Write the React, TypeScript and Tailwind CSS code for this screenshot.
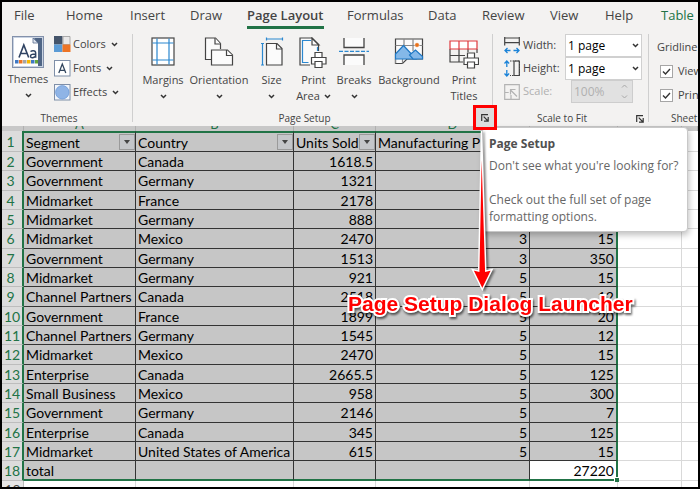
import { useState, type ReactNode } from "react";
import clsx from "clsx";

const tabs = [
  { name: "File", width: "w-[52px]" },
  { name: "Home", width: "w-[64px]" },
  { name: "Insert", width: "w-[60px]" },
  { name: "Draw", width: "w-[57px]" },
  { name: "Page Layout", width: "w-[100px]" },
  { name: "Formulas", width: "w-[81px]" },
  { name: "Data", width: "w-[54px]" },
  { name: "Review", width: "w-[68px]" },
  { name: "View", width: "w-[55px]" },
  { name: "Help", width: "w-[56px]" },
];

const rows = [
  ["Government", "Canada", "1618.5", "", ""],
  ["Government", "Germany", "1321", "", ""],
  ["Midmarket", "France", "2178", "", ""],
  ["Midmarket", "Germany", "888", "", ""],
  ["Midmarket", "Mexico", "2470", "3", "15"],
  ["Government", "Germany", "1513", "3", "350"],
  ["Midmarket", "Germany", "921", "5", "15"],
  ["Channel Partners", "Canada", "2518", "5", "12"],
  ["Government", "France", "1899", "5", "20"],
  ["Channel Partners", "Germany", "1545", "5", "12"],
  ["Midmarket", "Mexico", "2470", "5", "15"],
  ["Enterprise", "Canada", "2665.5", "5", "125"],
  ["Small Business", "Mexico", "958", "5", "300"],
  ["Government", "Germany", "2146", "5", "7"],
  ["Enterprise", "Canada", "345", "5", "125"],
  ["Midmarket", "United States of America", "615", "5", "15"],
  ["total", "", "", "", "27220"],
];

function Caret() {
  return (
    <svg width="7" height="5" viewBox="0 0 7 5" fill="none" stroke="#333" strokeWidth="1.5" className="shrink-0">
      <path d="M1 1l2.5 2.5L6 1" />
    </svg>
  );
}

function ThemesIcon() {
  return (
    <svg width="32" height="32" viewBox="0 0 32 32">
      <rect x="0.5" y="0.5" width="31" height="31" fill="#c9d3e2" stroke="#8391ab" />
      <path d="M22 2h8v28h-4V8z" fill="#4f6585" />
      <path d="M2 2h19l5 5v23H2z" fill="#fff" />
      <path d="M21 2v5h5z" fill="#dfe5ee" stroke="#5c7091" strokeWidth="0.8" />
      <path d="M7 21.5L11.8 9l4.9 12.500M8.500 17.500h6.500" fill="none" stroke="#2f4363" strokeWidth="1.6" />
      <path d="M18.500 15.500q1.500-1 3.200-.7q2 .3 2 2.500v4.500M23.700 18q-5.200 0-5.200 2t2.200 1.700q3-.5 3-2.700" fill="none" stroke="#2f4363" strokeWidth="1.4" />
      <path d="M3 24h3.500v3.500H3z" fill="#3f78c4" />
      <path d="M7 24h3.500v3.500H7z" fill="#ed7425" />
      <path d="M11 24h3.500v3.500H11z" fill="#a5a5a5" />
      <path d="M15 24h3.500v3.500H15z" fill="#f5b800" />
      <path d="M19 24h3.500v3.500H19z" fill="#3f78c4" />
      <path d="M23 24h3v3.500h-3z" fill="#64a53d" />
    </svg>
  );
}

function ColorsIcon() {
  return (
    <svg width="17" height="17" viewBox="0 0 17 17">
      <path d="M0 0h8.500v8.500H0z" fill="#44546a" />
      <path d="M9 .5h7v8H9z" fill="#e9e8e8" stroke="#999" strokeWidth="0.8" />
      <path d="M0 8.500h8.500V16H0z" fill="#5b9bd5" />
      <path d="M8.500 8.500h8V16h-8z" fill="#ed7425" />
    </svg>
  );
}

function FontsIcon() {
  return (
    <svg width="17" height="17" viewBox="0 0 17 17" fill="none">
      <rect x="0.5" y="0.5" width="15.500" height="15.500" fill="#fff" stroke="#7f8fa8" />
      <path d="M4.800 13L8.300 4l3.500 9M6 10.300h4.700" stroke="#33475f" strokeWidth="1.3" />
    </svg>
  );
}

function EffectsIcon() {
  return (
    <svg width="17" height="17" viewBox="0 0 17 17">
      <rect x="0.5" y="0.5" width="15.500" height="15.500" fill="#f3f6fb" stroke="#7f8fa8" />
      <circle cx="8.300" cy="8.300" r="6.700" fill="#8fb4e6" stroke="#6c9bd8" strokeWidth="0.8" />
    </svg>
  );
}

function MarginsIcon() {
  return (
    <svg width="24" height="30" viewBox="0 0 24 30" fill="none">
      <rect x="1" y="1" width="22" height="27" fill="#fff" stroke="#444" strokeWidth="1.2" />
      <path d="M6 1.500v26M18 1.500v26M1.500 6h21M1.500 23h21" stroke="#2b88d0" strokeWidth="1.2" />
    </svg>
  );
}

function OrientationIcon() {
  return (
    <svg width="30" height="30" viewBox="0 0 30 30" fill="#fbfbfb" stroke="#444" strokeWidth="1.200">
      <path d="M7.500 22.500H1.500V1h10l5 5.500V12" />
      <path d="M11 1v6h5.500" />
      <path d="M7.500 13h16l5 5v10h-21z" />
      <path d="M22.500 13v5.500h6" />
    </svg>
  );
}

function SizeIcon() {
  return (
    <svg width="24" height="30" viewBox="0 0 24 30" fill="none" strokeWidth="1.200">
      <path d="M7.500 6.500h9.500l5 5V28H6.500V6.500z" fill="#fbfbfb" stroke="#444" />
      <path d="M16.500 6.500V12H22" stroke="#444" />
      <path d="M6.500 2h16M6.500 .5v3M22.500 .5v3M2.500 6.500V28M1 6.500h3M1 28h3" stroke="#2b88d0" />
    </svg>
  );
}

function Printer() {
  return (
    <g fill="#fff" stroke="#444" strokeWidth="1.200">
      <path d="M4 6V1h7v5" />
      <path d="M.5 6h14.500v6.500H.5z" />
      <path d="M4 10h7v6H4z" />
    </g>
  );
}

function PrintAreaIcon() {
  return (
    <svg width="29" height="32" viewBox="0 0 29 32" fill="none" strokeWidth="1.200">
      <path d="M11 28H1V1h12l6.500 6.500V14" fill="#fbfbfb" stroke="#444" />
      <path d="M13 1v7h7z" stroke="#444" />
      <path d="M9.500 25.500h-6V3.500H12M18.500 10v4" stroke="#2b88d0" />
      <g transform="translate(12 14.500)">
        <Printer />
      </g>
    </svg>
  );
}

function BreaksIcon() {
  return (
    <svg width="30" height="30" viewBox="0 0 30 30" fill="none" strokeWidth="1.300">
      <path d="M5 1v9.500h20V1M5 28V18h20v10" fill="#fbfbfb" stroke="#444" />
      <path d="M0 14.300h30" stroke="#2b88d0" strokeDasharray="4 1.500" />
    </svg>
  );
}

function BackgroundIcon() {
  return (
    <svg width="30" height="30" viewBox="0 0 30 30" fill="none" strokeWidth="1.200">
      <path d="M1.500 2h27v20H13l-4.500 4.500h-7z" fill="#fbfbfb" stroke="#444" />
      <path d="M1.500 8.500h27M10 2v10M19 2v12M1.500 22v4.500M8.500 22v4.500" stroke="#888" />
      <path d="M1.500 17l8-8.500L22 22H1.500z" fill="#84b8e8" stroke="#1f78c4" />
      <path d="M15.500 18l6-5 7 6.500V22H19z" fill="#84b8e8" stroke="#1f78c4" />
      <circle cx="23" cy="8" r="2.300" fill="#e8721c" stroke="#fff" strokeWidth="0.500" />
    </svg>
  );
}

function PrintTitlesIcon() {
  return (
    <svg width="30" height="32" viewBox="0 0 30 32" fill="none" strokeWidth="1.200">
      <path d="M1 12v13h13M1 18.500h15M10 12v13M19 12v3M28 12v4" stroke="#444" />
      <path d="M1 4h27v8H1zM10 4v8M19 4v8" fill="#fff" stroke="#e0383c" />
      <g transform="translate(14.500 15)">
        <Printer />
      </g>
    </svg>
  );
}

function LauncherIcon() {
  return (
    <svg width="8" height="8" viewBox="0 0 8 8" fill="none" stroke="#333" strokeWidth="1.200">
      <path d="M.7 7V.7H7M2.700 2.700L7 7M7.200 3v4.200H3" />
    </svg>
  );
}

function WidthIcon() {
  return (
    <svg width="16" height="17" viewBox="0 0 16 17" fill="none">
      <path d="M.7 0v8.500M15.300 0v8.500M.7 1h14.600M.7 5.700h14.600" stroke="#444" strokeWidth="1.200" />
      <path d="M6.500 13.500H1M3.500 11L1 13.500 3.500 16M9.500 13.500H15M12.500 11l2.500 2.500-2.500 2.500" stroke="#1b83d8" strokeWidth="1.300" />
    </svg>
  );
}

function HeightIcon() {
  return (
    <svg width="16" height="17" viewBox="0 0 16 17" fill="none">
      <path d="M6 1h9.500v14.500H6" stroke="#444" strokeDasharray="1.500 1" />
      <path d="M10 1h5.300v14.500H10z" stroke="#444" strokeWidth="1.200" />
      <path d="M2.800 7V1M.5 3.500L2.800 1l2.300 2.500M2.800 10v6M.5 13.500L2.800 16l2.300-2.500" stroke="#1b83d8" strokeWidth="1.300" />
    </svg>
  );
}

function ScaleIcon() {
  return (
    <svg width="16" height="16" viewBox="0 0 16 16" fill="none" stroke="#b3b3b3" strokeWidth="1.200">
      <path d="M.7.700h14.600v14.600H.7zM.7 8.500h4M7 11v4" />
      <path d="M13 12.500L6.500 6M6.500 10.500V5.500h5" />
    </svg>
  );
}

function Group({ caption, className, children }: { caption: string; className: string; children: ReactNode }) {
  return (
    <section className={clsx("flex h-[97px] shrink-0 flex-col", className)}>
      <div className="h-[82px]">{children}</div>
      <div className="pr-4 text-center text-[10px] leading-[15px] whitespace-nowrap">{caption}</div>
    </section>
  );
}

function BigButton({ icon, lines, width, caret }: { icon: ReactNode; lines: string[]; width: string; caret?: boolean }) {
  return (
    <button className={clsx("flex shrink-0 flex-col items-center whitespace-nowrap", width)}>
      <span className="flex h-[35px] items-start">{icon}</span>
      <span className="leading-4">{lines[0]}</span>
      <span className="flex h-4 items-center gap-1 leading-4">
        {lines[1]}
        {caret && <Caret />}
      </span>
    </button>
  );
}

function SmallButton({ icon, label }: { icon: ReactNode; label: string }) {
  return (
    <button className="flex h-6 items-center gap-[2px]">
      {icon}
      {label}
      <span className="pl-[3px]">
        <Caret />
      </span>
    </button>
  );
}

function PageSelect({ id }: { id: string }) {
  return (
    <span className="relative flex">
      <select id={id} className="h-[23px] w-[77px] appearance-none border border-[#d0d0d0] bg-white pl-[2px] text-[12px] text-black">
        <option>1 page</option>
        <option>Automatic</option>
      </select>
      <span className="pointer-events-none absolute top-[9px] right-[3px] flex">
        <Caret />
      </span>
    </span>
  );
}

function FilterButton({ label }: { label: string }) {
  return (
    <button aria-label={label} className="flex size-4 shrink-0 items-center justify-center border border-[#9a9a9a] bg-[#c4c6c9]">
      <span className="border-x-3 border-t-4 border-x-transparent border-t-[#444]" />
    </button>
  );
}

function Ribbon() {
  const [active, setActive] = useState("Page Layout");

  return (
    <header className="overflow-hidden bg-[#f3f2f1] text-[11px] text-[#444]">
      <nav className="flex h-[27px] pl-3 text-[13px]">
        {tabs.map((t) => (
          <div key={t.name} className={clsx("shrink-0", t.width)}>
            <button
              onClick={() => setActive(t.name)}
              className={clsx("h-[27px] border-b-3 pt-1 whitespace-nowrap", active === t.name ? "border-[#217346] font-semibold" : "border-transparent")}
            >
              {t.name}
            </button>
          </div>
        ))}
        <button className="h-[27px] shrink-0 border-b-3 border-transparent pt-1 whitespace-nowrap text-[#217346]">Table D</button>
      </nav>

      <div className="flex">
        <Group caption="Themes" className="w-[130px]">
          <div className="flex pt-[7px]">
            <BigButton icon={<ThemesIcon />} lines={["Themes"]} width="w-[52px]" caret />
            <div className="-mt-1">
              <SmallButton icon={<ColorsIcon />} label="Colors" />
              <SmallButton icon={<FontsIcon />} label="Fonts" />
              <SmallButton icon={<EffectsIcon />} label="Effects" />
            </div>
          </div>
        </Group>

        <div className="mt-[5px] h-[88px] w-px shrink-0 bg-[#cfcfcf]" />

        <Group caption="Page Setup" className="w-[359px]">
          <div className="flex pt-[8px] pl-[6px]">
            <BigButton icon={<MarginsIcon />} lines={["Margins"]} width="w-[48px]" caret />
            <BigButton icon={<OrientationIcon />} lines={["Orientation"]} width="w-[64px]" caret />
            <BigButton icon={<SizeIcon />} lines={["Size"]} width="w-[41px]" caret />
            <BigButton icon={<PrintAreaIcon />} lines={["Print", "Area"]} width="w-[43px]" caret />
            <BigButton icon={<BreaksIcon />} lines={["Breaks"]} width="w-[38px]" caret />
            <BigButton icon={<BackgroundIcon />} lines={["Background"]} width="w-[72px]" />
            <BigButton icon={<PrintTitlesIcon />} lines={["Print", "Titles"]} width="w-[38px]" />
          </div>
        </Group>

        <div className="mt-[5px] h-[88px] w-px shrink-0 bg-[#cfcfcf]" />

        <section className="flex h-[97px] w-[155px] shrink-0 flex-col pt-[5px] pl-[11px]">
          <div className="flex h-[77px] flex-col">
            <div className="flex h-[23px] items-center gap-[3px]">
              <WidthIcon />
              <label htmlFor="width" className="w-[39px]">Width:</label>
              <PageSelect id="width" />
            </div>
            <div className="flex h-[23px] items-center gap-[3px]">
              <HeightIcon />
              <label htmlFor="height" className="w-[39px]">Height:</label>
              <PageSelect id="height" />
            </div>
            <div className="flex h-[23px] items-center gap-[3px] text-[#b0b0b0]">
              <ScaleIcon />
              <label htmlFor="scale" className="w-[45px]">Scale:</label>
              <span className="relative flex">
                <input id="scale" disabled defaultValue="100%" className="h-[23px] w-[62px] border border-[#cdcdcd] bg-[#e1e1e1] pl-[2px] text-[12px]" />
                <svg width="7" height="15" viewBox="0 0 7 15" fill="none" stroke="#a8a8a8" className="absolute top-[4px] right-[5px]">
                  <path d="M1 3.500L3.500 1 6 3.500M1 11.500L3.500 14 6 11.500" />
                </svg>
              </span>
            </div>
          </div>
          <div className="flex items-center justify-between pr-[4px] pl-[33px] text-[10px] leading-[15px]">
            Scale to Fit
            <button aria-label="Scale to Fit settings">
              <LauncherIcon />
            </button>
          </div>
        </section>

        <div className="mt-[5px] h-[88px] w-px shrink-0 bg-[#cfcfcf]" />

        <section className="flex h-[97px] min-w-0 flex-1 flex-col overflow-hidden pt-[6px] pl-[8px] whitespace-nowrap">
          <div className="h-[76px]">
            <div className="h-6 leading-6">Gridline</div>
            {["View", "Print"].map((name) => (
              <label key={name} className="flex h-6 items-center gap-[5px] pl-[3px]">
                <span className="relative flex">
                  <input type="checkbox" defaultChecked className="peer size-[13px] appearance-none border border-[#a6a6a6] bg-white" />
                  <svg width="13" height="13" viewBox="0 0 13 13" fill="none" stroke="#333" strokeWidth="1.400" className="pointer-events-none absolute hidden peer-checked:block">
                    <path d="M3 6.500L5.500 9 10 4" />
                  </svg>
                </span>
                {name}
              </label>
            ))}
          </div>
          <div className="pl-[14px] text-[10px] leading-[15px]">Sheet</div>
        </section>
      </div>
    </header>
  );
}

const head = "border-r border-b border-[#333] border-t-2 border-t-[#217346] bg-[#c6c6c6] py-0 pr-0 pl-[2px] text-left font-normal";

function Sheet() {
  return (
    <table className="w-full table-fixed border-separate border-spacing-0 bg-white text-[14px] leading-[17px] whitespace-nowrap text-black">
      <colgroup>
        <col className="w-[22px]" />
        <col className="w-[112px]" />
        <col className="w-[158px]" />
        <col className="w-[82px]" />
        <col className="w-[154px]" />
        <col className="w-[88px]" />
        <col className="w-[64px]" />
        <col />
      </colgroup>
      <thead>
        <tr className="bg-[#c8c8c8] text-[13px] text-[#217346]">
          {["", "A", "B", "C", "D", "", "", ""].map((letter, i) => (
            <th key={i} className="border-r border-[#b0b0b0] p-0 font-normal">
              <div className="flex h-[5px] items-end justify-center overflow-hidden pb-[2px] leading-[10px]">{letter}</div>
            </th>
          ))}
        </tr>
      </thead>
      <tbody>
        <tr className="h-[21px]">
          <RowNumber n={1} />
          <th className={head}>
            <div className="flex items-center justify-between">Segment<FilterButton label="Filter Segment" /></div>
          </th>
          <th className={head}>
            <div className="flex items-center justify-between">Country<FilterButton label="Filter Country" /></div>
          </th>
          <th className={head}>
            <div className="flex items-center justify-between">Units Sold<FilterButton label="Filter Units Sold" /></div>
          </th>
          <th className={head}>Manufacturing P</th>
          <th className={head} />
          <td className="border-r border-b border-[#d9d9d9]" />
          <td className="border-b border-[#d9d9d9]" />
        </tr>
        {rows.map((row, r) => {
          const last = r === rows.length - 1;
          return (
            <tr key={r} className={r % 3 === 1 ? "h-5" : "h-[19px]"}>
              <RowNumber n={r + 2} />
              {row.map((cell, c) => (
                <td
                  key={c}
                  className={clsx(
                    "relative border-r p-0",
                    c < 2 ? "pl-[2px]" : "pr-[2px] text-right",
                    c === 4 ? "border-r-2 border-r-[#217346]" : "border-r-[#333]",
                    last ? "border-b-2 border-b-[#217346]" : "border-b border-b-[#333]",
                    last && c === 4 ? "bg-white" : "bg-[#c6c6c6]",
                  )}
                >
                  {cell}
                  {last && c === 4 && <span className="absolute -right-[3px] -bottom-[3px] size-[5px] border-t border-l border-white bg-[#217346]" />}
                </td>
              ))}
              <td className="border-r border-b border-[#d9d9d9]" />
              <td className="border-b border-[#d9d9d9]" />
            </tr>
          );
        })}
        <tr>
          <td className="border-r border-[#bbb] bg-[#e6e6e6] p-0">
            <div className="h-[6px] overflow-hidden text-center leading-[18px] text-[#444]">19</div>
          </td>
          {[0, 1, 2, 3, 4, 5].map((c) => (
            <td key={c} className="border-r border-[#d9d9d9] p-0" />
          ))}
          <td />
        </tr>
      </tbody>
    </table>
  );
}

function RowNumber({ n }: { n: number }) {
  return (
    <th className={clsx("border-r-2 border-b border-r-[#217346] border-b-[#bdbdbd] bg-[#dcdcdc] p-0 font-normal text-[#217346]", n < 10 && "pr-[3px]")}>{n}</th>
  );
}

export default function App() {
  return (
    <main className="relative overflow-hidden border-2 border-black font-['Open_Sans','Segoe_UI',sans-serif]">
      <Ribbon />
      <div className="font-['Lato','Calibri',sans-serif]">
        <Sheet />
      </div>

      <aside role="tooltip" className="absolute top-[125px] left-[480px] w-[206px] rounded-[4px] border border-[#c8c8c8] bg-white px-[6px] pt-[7px] pb-[6px] text-[12px] leading-[17px] text-[#666] shadow-[1px_3px_6px_rgba(0,0,0,0.25)]">
        <h2 className="pb-[5px] font-bold text-[#505050]">Page Setup</h2>
        <p className="pb-[17px] whitespace-nowrap">Don't see what you're looking for?</p>
        <p>Check out the full set of page formatting options.</p>
      </aside>

      <svg width="30" height="170" viewBox="0 0 30 170" className="absolute top-[124px] left-[465px] drop-shadow-[2px_1px_1px_rgba(0,0,0,0.5)]">
        <path d="M14.500 5L18.800 145 25 143.500 15.300 163.500 5.500 143.500 11.700 145z" fill="#f00" stroke="#fff" strokeWidth="1.500" />
      </svg>

      <button aria-label="Page Setup Dialog Launcher" className="absolute top-[103px] left-[471px] flex h-[25px] w-[24px] items-center justify-center border-3 border-[#f00] bg-[#dcdcdc]">
        <LauncherIcon />
      </button>

      <p className="absolute top-[288px] left-[346px] font-['Liberation_Sans',Arial,sans-serif] text-[21px] leading-7 font-bold whitespace-nowrap text-[#f00] drop-shadow-[1px_2px_1px_rgba(0,0,0,0.6)] [-webkit-text-stroke:4px_white] [paint-order:stroke_fill]">
        Page Setup Dialog Launcher
      </p>
    </main>
  );
}
